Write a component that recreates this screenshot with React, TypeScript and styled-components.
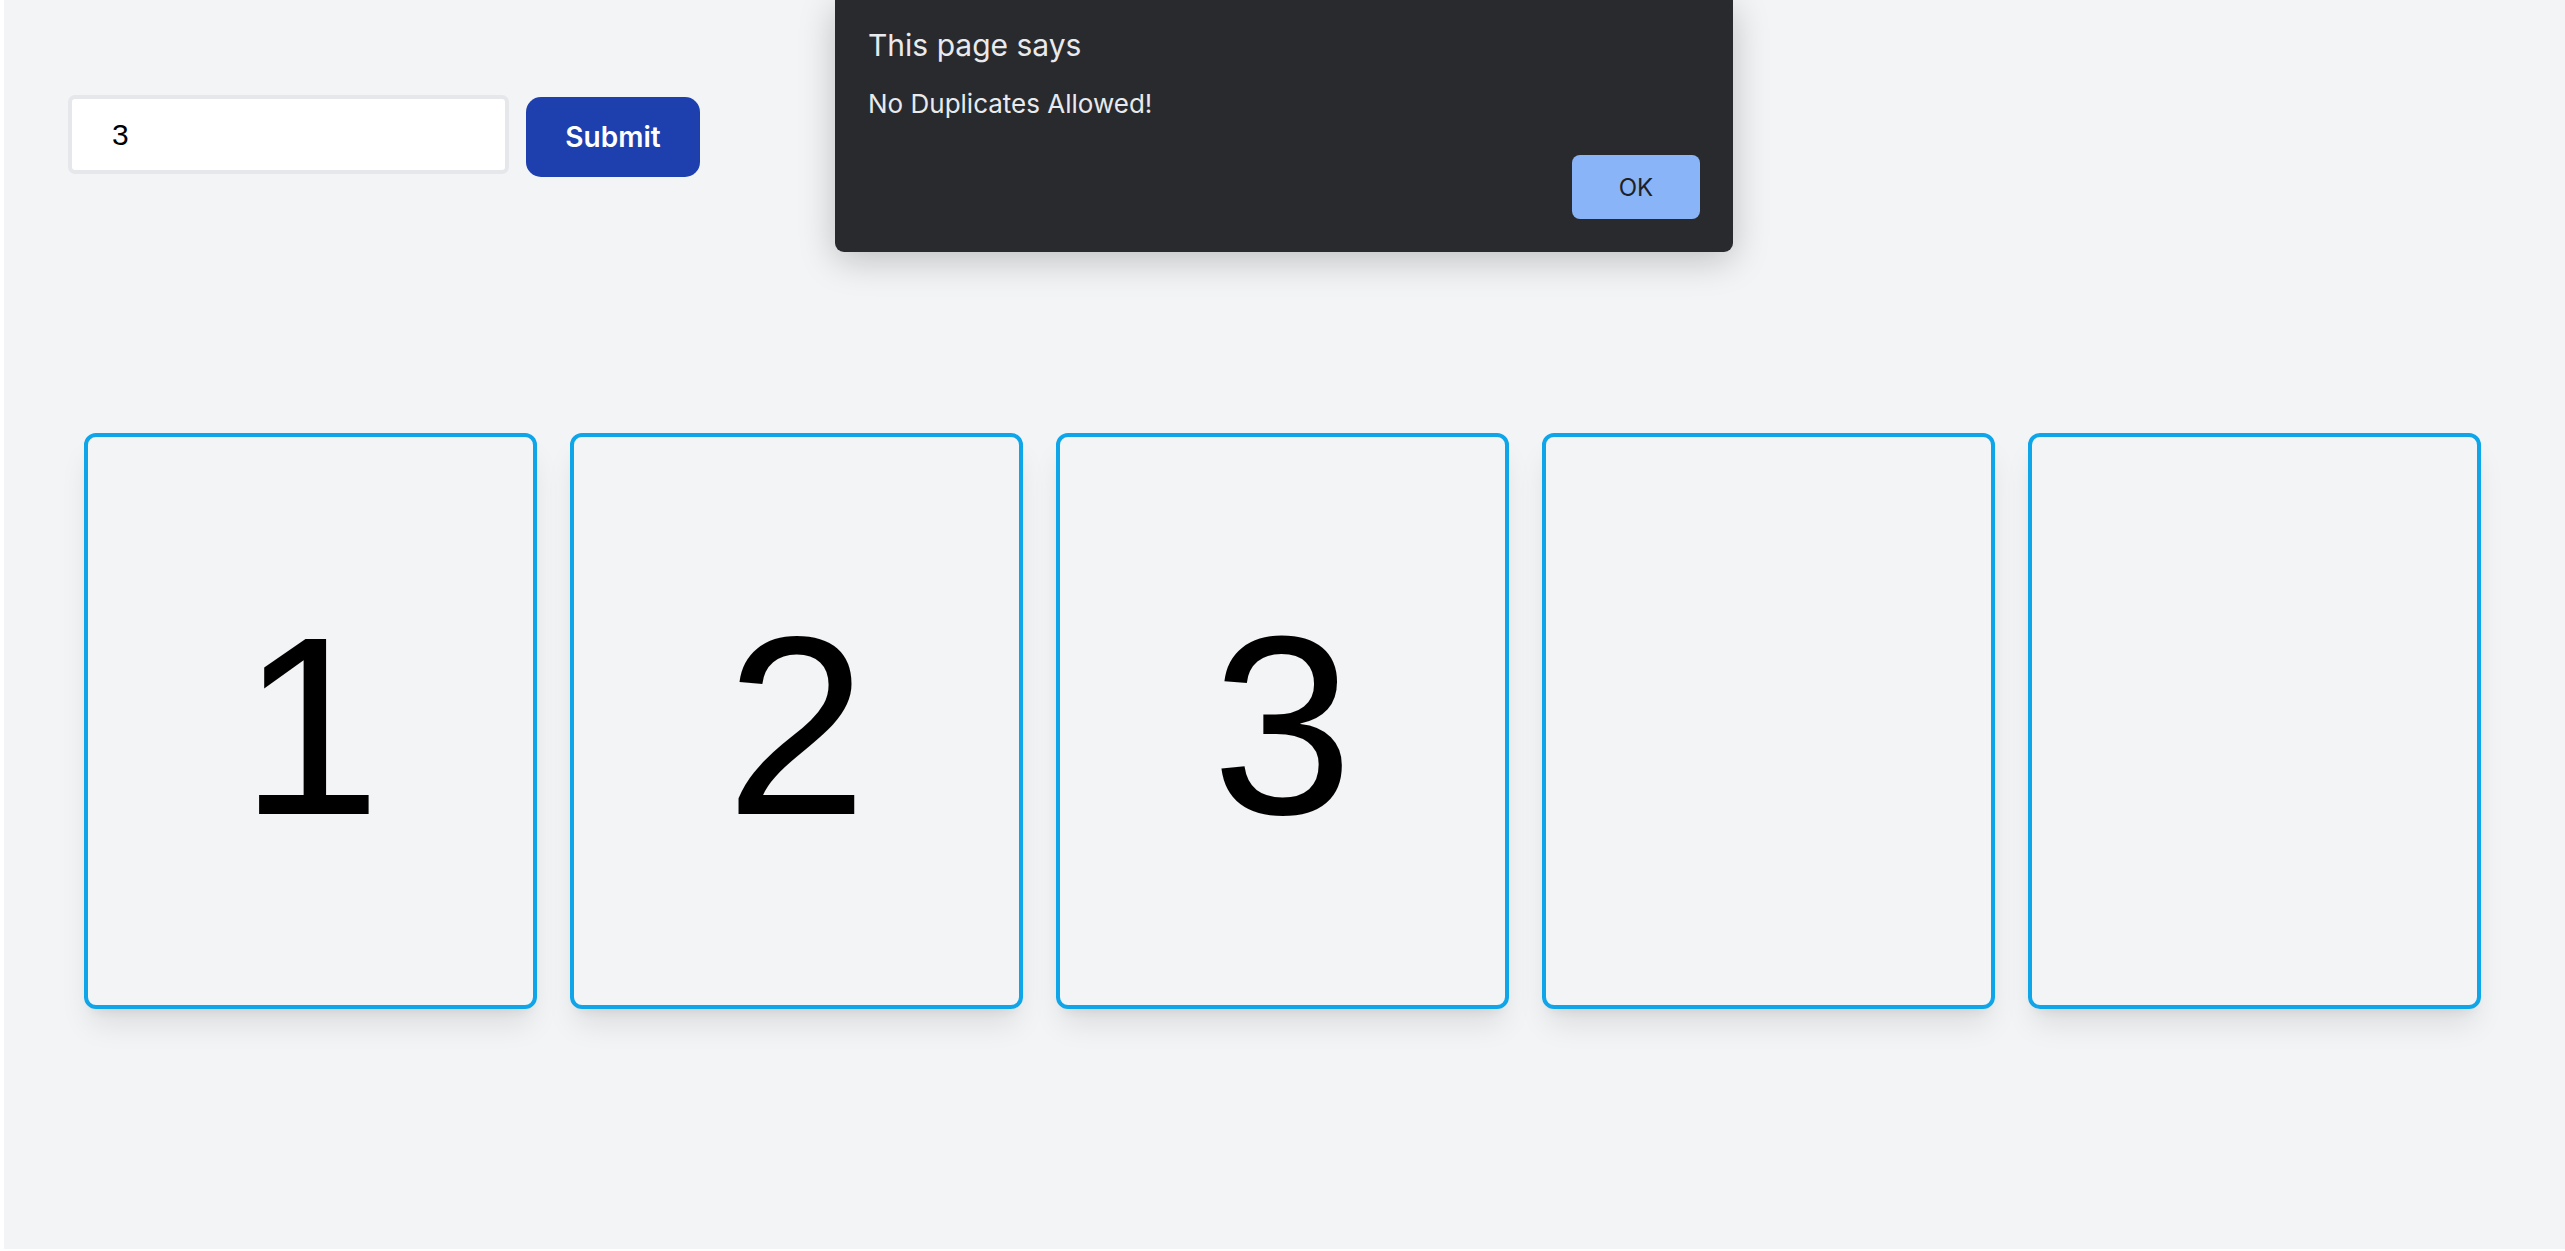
import styled, { createGlobalStyle } from 'styled-components'
import { useState } from 'react'

const GlobalStyle = createGlobalStyle`
  html, body {
    margin: 0;
    padding: 0;
    background: #ffffff;
  }
  * {
    box-sizing: border-box;
  }
`

const App = () => {
  const [value, setValue] = useState('3')
  const slots = ['1', '2', '3', '', '']

  return (
    <>
      <GlobalStyle />
      <Page>
        <Form onSubmit={(e) => e.preventDefault()}>
          <NumberInput value={value} onChange={(e) => setValue(e.target.value)} />
          <SubmitButton type="submit">Submit</SubmitButton>
        </Form>
        <CardRow>
          {slots.map((n, i) => (
            <Card key={i}>{n}</Card>
          ))}
        </CardRow>
        <Alert>
          <AlertTitle>This page says</AlertTitle>
          <AlertMessage>No Duplicates Allowed!</AlertMessage>
          <AlertFooter>
            <OkButton>OK</OkButton>
          </AlertFooter>
        </Alert>
      </Page>
    </>
  )
}

const Page = styled.div`
  position: relative;
  margin-left: 4px;
  height: 1249px;
  background-color: #f3f4f6;
  padding: 95px 0 0 64px;
`

const Form = styled.form`
  display: flex;
  align-items: flex-start;
  gap: 17px;
`

const NumberInput = styled.input`
  width: 441px;
  height: 79px;
  border: 4px solid #e5e7eb;
  border-radius: 7px;
  background: #ffffff;
  padding: 0 38px 0 40px;
  font-family: 'Liberation Sans', Arial, sans-serif;
  font-size: 30px;
  color: #000000;
  outline: none;
`

const SubmitButton = styled.button`
  margin-top: 2px;
  width: 174px;
  height: 80px;
  border: none;
  border-radius: 15px;
  background-color: #1e40af;
  color: #ffffff;
  font-family: Inter, 'Noto Sans', sans-serif;
  font-size: 28px;
  font-weight: 600;
  cursor: pointer;
`

const CardRow = styled.div`
  display: flex;
  gap: 33px;
  margin-top: 256px;
  margin-left: 16px;
`

const Card = styled.div`
  width: 453px;
  height: 576px;
  border: 4px solid #0ea5e9;
  border-radius: 12px;
  box-shadow: 0 20px 30px -6px rgba(0, 0, 0, 0.1), 0 8px 12px -8px rgba(0, 0, 0, 0.1);
  display: flex;
  align-items: center;
  justify-content: center;
  padding-top: 10px;
  font-family: 'Liberation Sans', Arial, sans-serif;
  font-size: 254px;
  color: #000000;
`

const Alert = styled.div`
  position: absolute;
  top: 0;
  left: 831px;
  width: 898px;
  height: 252px;
  background-color: #292a2d;
  border-radius: 0 0 9px 9px;
  box-shadow: 0 8px 36px rgba(0, 0, 0, 0.22);
  padding: 25px 33px 33px 33px;
  display: flex;
  flex-direction: column;
  font-family: Inter, Roboto, sans-serif;
  color: #e8eaed;
`

const AlertTitle = styled.div`
  font-size: 30px;
  line-height: 40px;
`

const AlertMessage = styled.div`
  margin-top: 22px;
  font-size: 26px;
  line-height: 34px;
`

const AlertFooter = styled.div`
  margin-top: auto;
  display: flex;
  justify-content: flex-end;
`

const OkButton = styled.button`
  width: 128px;
  height: 64px;
  border: none;
  border-radius: 8px;
  background-color: #8ab4f8;
  color: #202124;
  font-family: Inter, Roboto, sans-serif;
  font-size: 24px;
  cursor: pointer;
`

export default App
